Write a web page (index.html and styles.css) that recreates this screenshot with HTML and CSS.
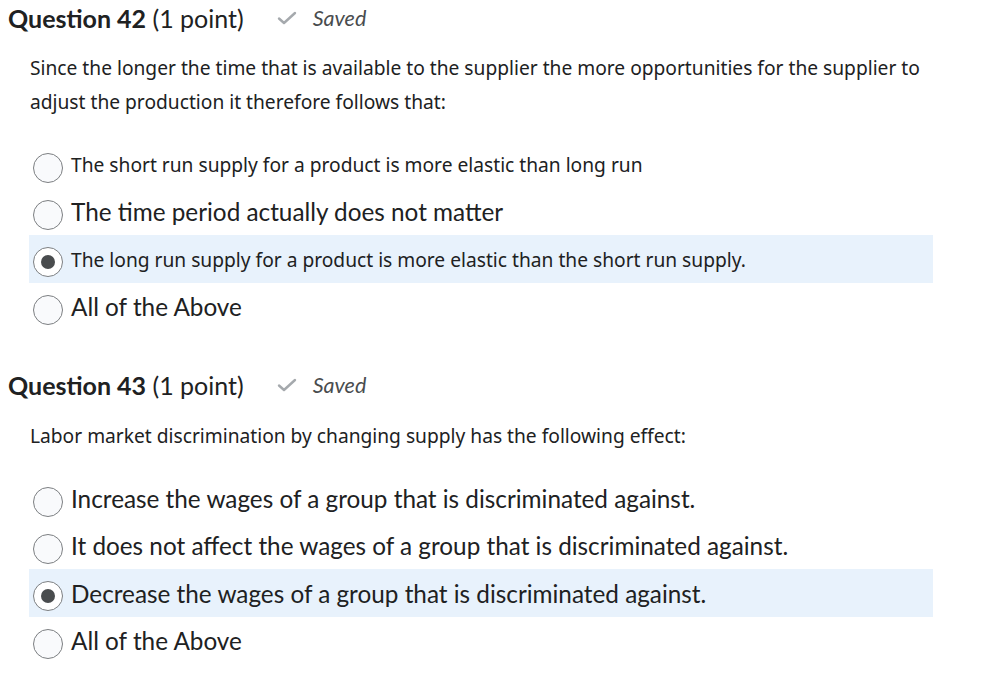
FILE: index.html
```html
<!DOCTYPE html>
<html>
<head>
<meta charset="utf-8">
<link rel="stylesheet" href="styles.css">
</head>
<body>
<div class="page">
  <section class="question">
    <div class="q-head">
      <h2 class="q-title"><b>Question 42</b> (1 point)</h2>
      <span class="saved">
        <svg class="check" viewBox="0 0 20 14" width="20" height="14"><path d="M2 7.5 L7 12 L18 2" fill="none" stroke="#a5a9ad" stroke-width="2.4" stroke-linecap="round" stroke-linejoin="round"/></svg>
        <i>Saved</i>
      </span>
    </div>
    <p class="q-text">Since the longer the time that is available to the supplier the more opportunities for the supplier to adjust the production it therefore follows that:</p>
    <ul class="options">
      <li class="opt"><span class="radio"></span><span class="lbl seg">The short run supply for a product is more elastic than long run</span></li>
      <li class="opt"><span class="radio"></span><span class="lbl lato">The time period actually does not matter</span></li>
      <li class="opt selected"><span class="radio checked"></span><span class="lbl seg">The long run supply for a product is more elastic than the short run supply.</span></li>
      <li class="opt"><span class="radio"></span><span class="lbl lato">All of the Above</span></li>
    </ul>
  </section>
  <section class="question q2">
    <div class="q-head">
      <h2 class="q-title"><b>Question 43</b> (1 point)</h2>
      <span class="saved">
        <svg class="check" viewBox="0 0 20 14" width="20" height="14"><path d="M2 7.5 L7 12 L18 2" fill="none" stroke="#a5a9ad" stroke-width="2.4" stroke-linecap="round" stroke-linejoin="round"/></svg>
        <i>Saved</i>
      </span>
    </div>
    <p class="q-text">Labor market discrimination by changing supply has the following effect:</p>
    <ul class="options">
      <li class="opt"><span class="radio"></span><span class="lbl lato">Increase the wages of a group that is discriminated against.</span></li>
      <li class="opt"><span class="radio"></span><span class="lbl lato">It does not affect the wages of a group that is discriminated against.</span></li>
      <li class="opt selected"><span class="radio checked"></span><span class="lbl lato">Decrease the wages of a group that is discriminated against.</span></li>
      <li class="opt"><span class="radio"></span><span class="lbl lato">All of the Above</span></li>
    </ul>
  </section>
</div>
</body>
</html>
```
FILE: styles.css
```css
html, body {
  margin: 0;
  padding: 0;
  background: #ffffff;
}
.page {
  padding: 0 0 0 8px;
  color: #202122;
  font-family: Lato, "Liberation Sans", sans-serif;
}
.question {
  width: 925px;
}
.q2 {
  margin-top: 37px;
}
.q-head {
  display: flex;
  align-items: center;
  height: 36px;
}
.q-title {
  margin: 0;
  font-size: 25px;
  font-weight: 400;
  line-height: 36px;
}
.q-title b {
  font-weight: 700;
}
.saved {
  display: flex;
  align-items: center;
  margin-left: 33px;
  color: #494c4e;
  font-size: 21.5px;
}
.check {
  margin-right: 16px;
}
.q-text {
  margin: 15px 0 0 22px;
  font-family: "Noto Sans", sans-serif;
  font-size: 19.2px;
  line-height: 34px;
}
.q2 .q-text {
  margin-top: 16px;
}
.options {
  list-style: none;
  margin: 22px 0 0 0;
  padding: 0;
}
.q2 .options {
  margin-top: 22px;
}
.opt {
  display: flex;
  align-items: center;
  height: 47px;
  padding-left: 25px;
}
.opt.selected {
  background: #e8f2fc;
  height: 48px;
  margin-left: 21px;
  padding-left: 4px;
}
.radio {
  box-sizing: border-box;
  width: 30px;
  height: 30px;
  margin-top: 6px;
  border-radius: 50%;
  border: 1px solid #7c7f82;
  background: #f9fafc;
  flex: none;
  display: flex;
  align-items: center;
  justify-content: center;
}
.radio.checked {
  background: #ffffff;
}
.radio.checked::after {
  content: "";
  width: 14px;
  height: 14px;
  border-radius: 50%;
  background: #494c4e;
}
.lbl {
  margin-left: 8px;
}
.seg {
  font-family: "Noto Sans", sans-serif;
  font-size: 19.2px;
}
.lato {
  font-size: 24.3px;
}
```
